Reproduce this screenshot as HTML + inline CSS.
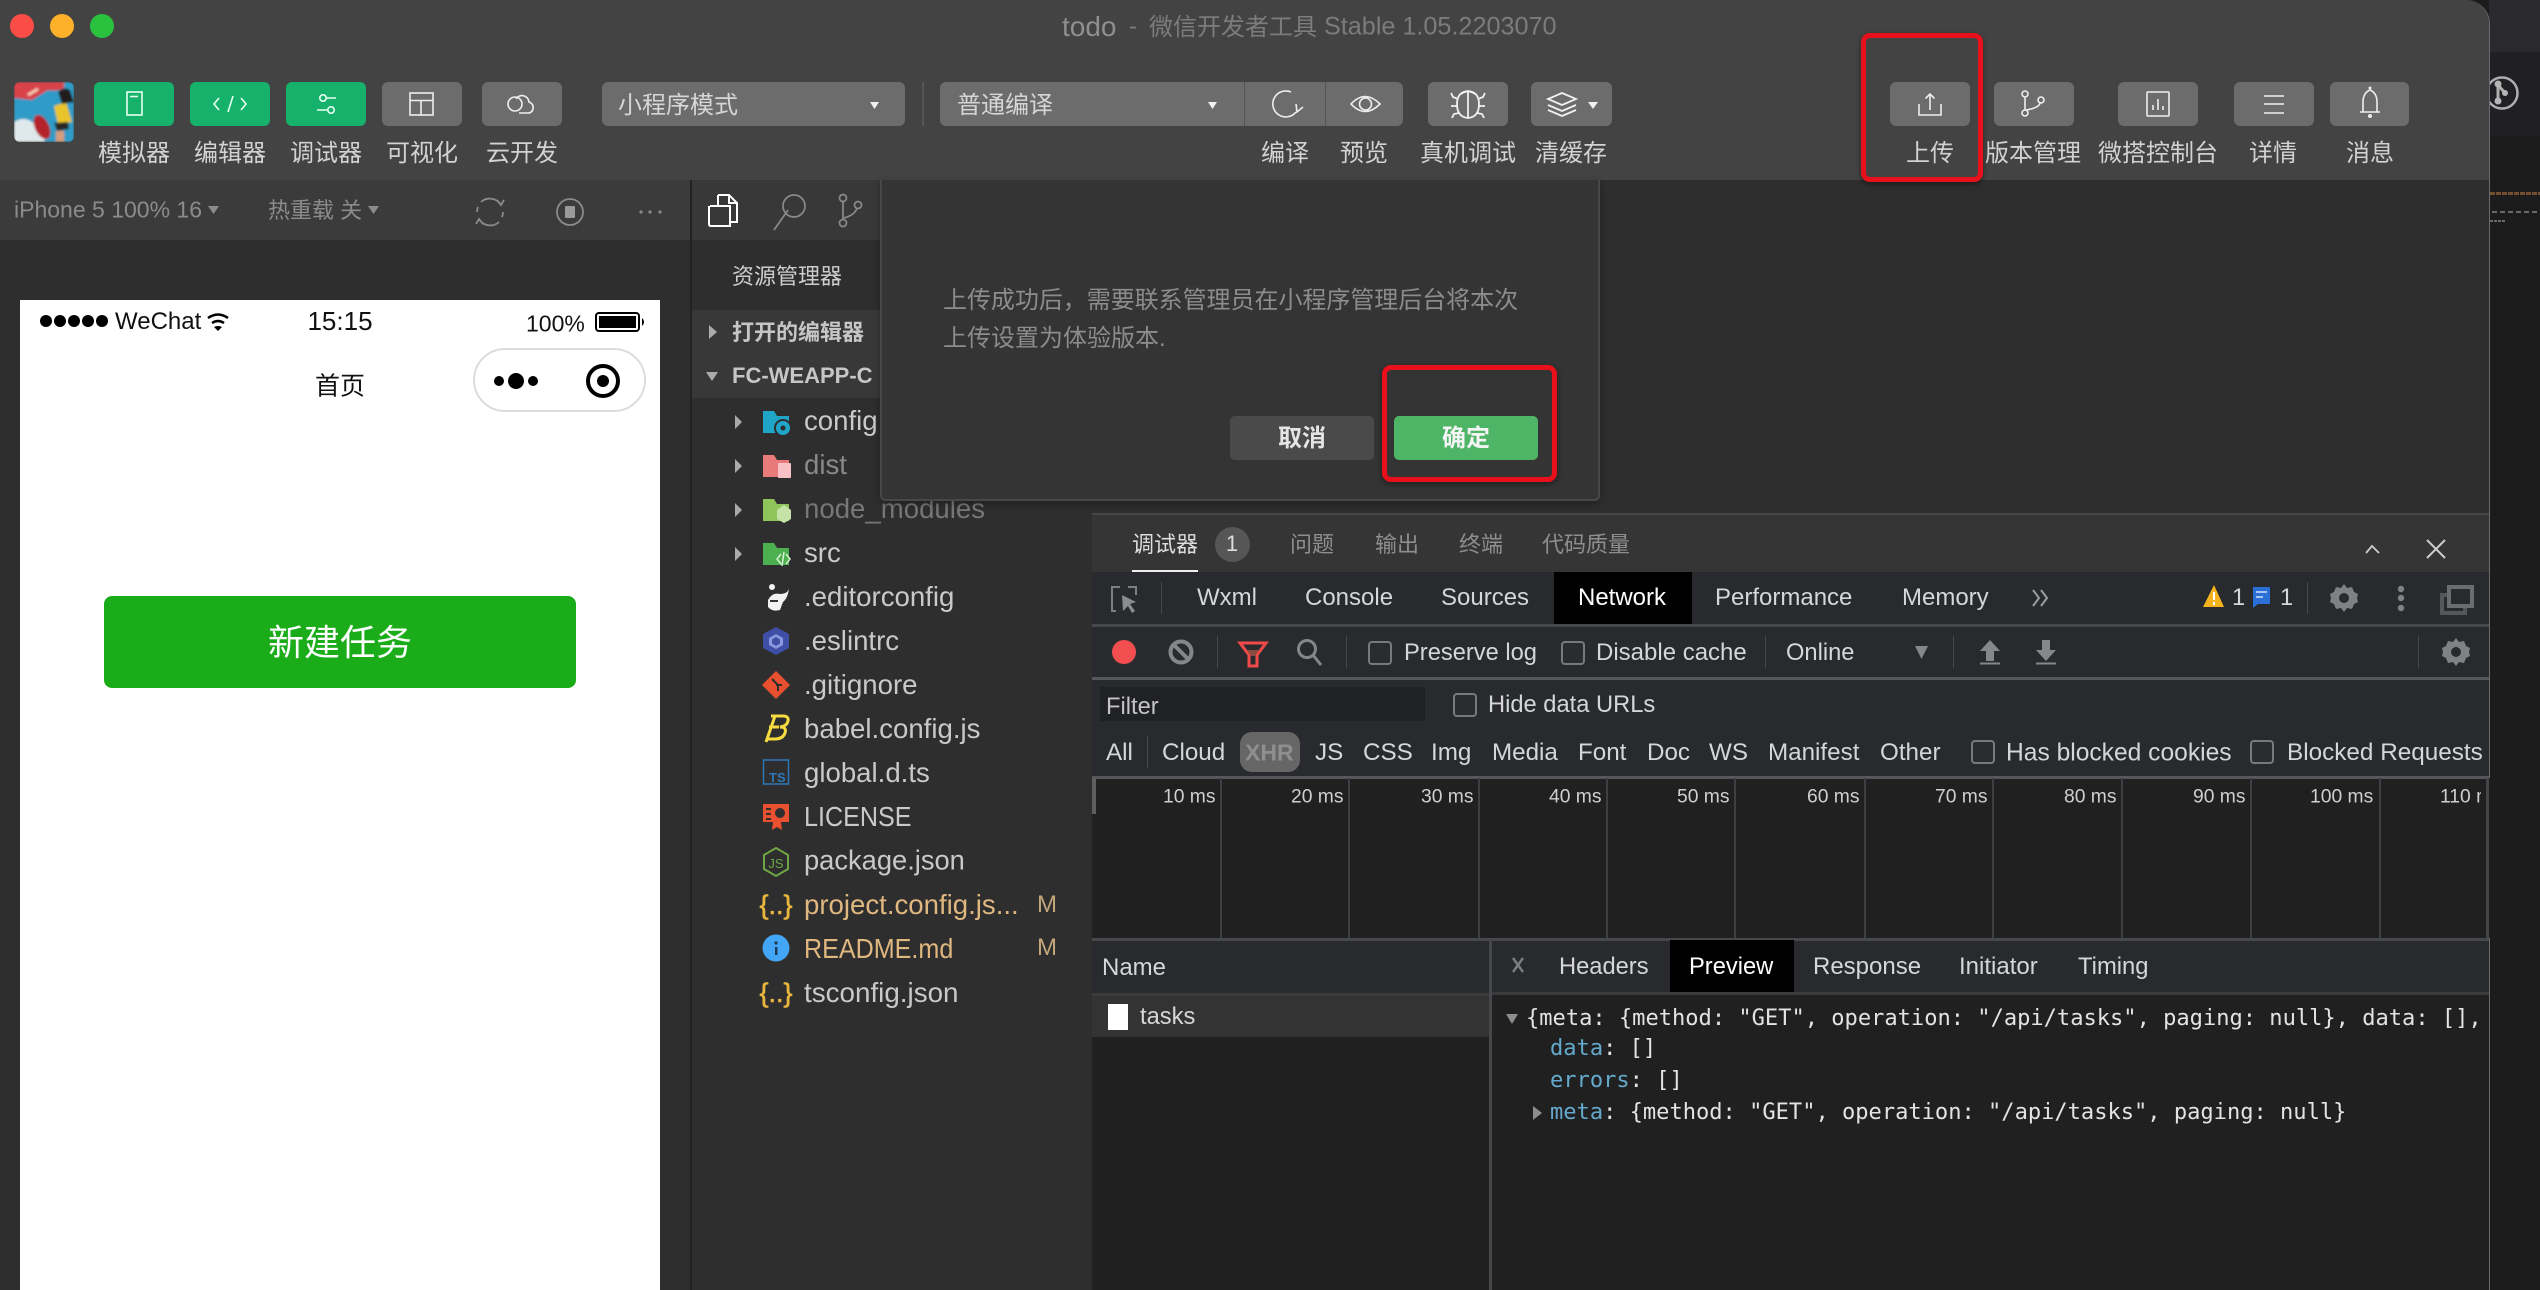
<!DOCTYPE html>
<html><head><meta charset="utf-8"><style>
html,body{margin:0;padding:0;background:#1c1c1c}
#p{position:relative;width:2540px;height:1290px;overflow:hidden;background:#1c1c1c;font-family:"Liberation Sans","Noto Sans CJK SC",sans-serif}
#p div{position:absolute}
.t{position:absolute;white-space:nowrap;line-height:1;transform:translateY(-50%);color:#c8c8c8}
.c{transform:translate(-50%,-50%)}
.l{font-size:24px;color:#d2d2d2;top:153.5px}
.b{top:82px;height:44px;border-radius:6px;background:#6c6c6c}
.g{background:#16b26b}
.f{left:804px;font-size:27.6px;color:#c9c9c9}
.sx{transform:translateY(-50%) scaleX(.91);transform-origin:left center}
.dt{font-size:23.7px;color:#d4d6d8}
.r5{font-size:24.2px}
.dt2{font-size:22px;color:#8e8e8e}
.cb{width:20px;height:20px;border:2px solid #77797c;border-radius:4px;background:#2b2c2f}
.tm{font-size:19.3px;color:#cfcfcf;top:797px}
.m{font-family:"DejaVu Sans Mono","Liberation Mono",monospace;font-size:22.06px;color:#e3e3e3}
.m i{font-style:normal;color:#64a9cc}
.ln{background:#3e3f42;width:2px;top:778px;height:160px}
</style></head><body><div id="p">

<!-- far right background -->
<div style="left:2489px;top:0;width:51px;height:52px;background:#2a2a2e"></div>
<div style="left:2489px;top:52px;width:51px;height:84px;background:#202024"></div>
<svg width="60" height="240" viewBox="2480 0 60 240" style="position:absolute;left:2480px;top:0" fill="none">
<circle cx="2502" cy="93" r="15.500" stroke="#aeaeae" stroke-width="2.500"/>
<path d="M2498 84v17M2498 85l7 8" stroke="#aeaeae" stroke-width="3"/>
<circle cx="2498" cy="84" r="3.500" fill="#b5b5b5"/><circle cx="2498" cy="101" r="3.500" fill="#b5b5b5"/><circle cx="2505" cy="93" r="3" fill="#b5b5b5"/>
<path d="M2490 193.500h50" stroke="#8a5c36" stroke-width="3" stroke-dasharray="5 1" opacity=".8"/>
<path d="M2492 212h48" stroke="#8fa0a8" stroke-width="2" stroke-dasharray="5 3" opacity=".6"/>
<path d="M2490 221h16" stroke="#8a8a8a" stroke-width="2" stroke-dasharray="3 1" opacity=".7"/>
</svg>

<!-- window -->
<div style="left:0;top:0;width:2489px;height:1290px;background:#2e2e2e;border-radius:0 24px 0 0;overflow:hidden;border-right:1px solid #6a6b6e;box-sizing:content-box">
  <div style="left:0;top:0;width:2489px;height:180px;background:#434343"></div>
  <div style="left:0;top:180px;width:690px;height:60px;background:#3b3b3b"></div>
  <div style="left:690px;top:180px;width:2px;height:1110px;background:#222"></div>
  <div style="left:692px;top:180px;width:190px;height:60px;background:#383838"></div>
  <div style="left:692px;top:310px;width:200px;height:88px;background:#383838"></div>
</div>

<!-- toolbar buttons -->
<div class="b g" style="left:94px;width:80px"></div>
<div class="b g" style="left:190px;width:80px"></div>
<div class="b g" style="left:286px;width:80px"></div>
<div class="b" style="left:382px;width:80px"></div>
<div class="b" style="left:482px;width:80px"></div>
<div class="b" style="left:602px;width:303px"></div>
<div style="left:922px;top:82px;width:2px;height:44px;background:#555"></div>
<div class="b" style="left:940px;width:463px"></div>
<div style="left:1244px;top:82px;width:1px;height:44px;background:#555"></div>
<div style="left:1325px;top:82px;width:1px;height:44px;background:#555"></div>
<div class="b" style="left:1428px;width:80px"></div>
<div class="b" style="left:1531px;width:81px"></div>
<div class="b" style="left:1890px;width:80px"></div>
<div class="b" style="left:1994px;width:80px"></div>
<div class="b" style="left:2118px;width:80px"></div>
<div class="b" style="left:2234px;width:80px"></div>
<div class="b" style="left:2330px;width:79px"></div>

<!-- title -->
<span class="t" style="left:1062px;top:27px;font-size:28px;color:#8f8f8f">todo</span>
<span class="t" style="left:1129px;top:27px;font-size:24px;color:#7c7c7c">-</span>
<span class="t" style="left:1149px;top:27.500px;font-size:24px;color:#7c7c7c">微信开发者工具</span>
<span class="t" style="left:1324px;top:27px;font-size:25.2px;color:#7c7c7c">Stable 1.05.2203070</span>

<!-- toolbar labels -->
<span class="t c l" style="left:134px">模拟器</span>
<span class="t c l" style="left:230px">编辑器</span>
<span class="t c l" style="left:326px">调试器</span>
<span class="t c l" style="left:422px">可视化</span>
<span class="t c l" style="left:522px">云开发</span>
<span class="t c l" style="left:1285px">编译</span>
<span class="t c l" style="left:1364px">预览</span>
<span class="t c l" style="left:1468px">真机调试</span>
<span class="t c l" style="left:1571px">清缓存</span>
<span class="t c l" style="left:1930px">上传</span>
<span class="t c l" style="left:2033px">版本管理</span>
<span class="t c l" style="left:2158px">微搭控制台</span>
<span class="t c l" style="left:2273px">详情</span>
<span class="t c l" style="left:2370px">消息</span>
<span class="t" style="left:618px;top:106px;font-size:24px;color:#d6d6d6">小程序模式</span>
<span class="t" style="left:957px;top:106px;font-size:24px;color:#d6d6d6">普通编译</span>

<!-- simulator toolbar -->
<span class="t" style="left:14px;top:210px;font-size:23px;color:#8b8b8b">iPhone 5 100% 16</span>
<span class="t" style="left:268px;top:211px;font-size:22px;color:#8b8b8b">热重载 关</span>

<!-- phone -->
<div style="left:20px;top:300px;width:640px;height:990px;background:#fff"></div>
<span class="t" style="left:115px;top:322px;font-size:24px;color:#111">WeChat</span>
<span class="t c" style="left:340px;top:321px;font-size:26px;color:#111">15:15</span>
<span class="t" style="left:526px;top:324px;font-size:23px;color:#111">100%</span>
<span class="t c" style="left:340px;top:386.500px;font-size:25px;color:#111">首页</span>
<div style="left:473px;top:348px;width:173px;height:64px;box-sizing:border-box;border:2px solid #dcdcdc;border-radius:32px;background:#fff"></div>
<div style="left:104px;top:596px;width:472px;height:92px;background:#1aad19;border-radius:8px"></div>
<span class="t c" style="left:340px;top:642.500px;font-size:36px;color:#fff">新建任务</span>

<!-- explorer -->
<span class="t" style="left:732px;top:277px;font-size:22px;color:#cdcdcd">资源管理器</span>
<span class="t" style="left:732px;top:333px;font-size:22px;font-weight:bold;color:#c6c6c6">打开的编辑器</span>
<span class="t" style="left:732px;top:376px;font-size:22px;font-weight:bold;color:#c6c6c6">FC-WEAPP-C</span>
<span class="t f" style="top:421px">config</span>
<span class="t f" style="top:465px;color:#8a8a8a">dist</span>
<span class="t f" style="top:509px;color:#777">node_modules</span>
<span class="t f" style="top:553px">src</span>
<span class="t f" style="top:597px">.editorconfig</span>
<span class="t f" style="top:641px">.eslintrc</span>
<span class="t f" style="top:685px">.gitignore</span>
<span class="t f" style="top:729px">babel.config.js</span>
<span class="t f" style="top:773px">global.d.ts</span>
<span class="t f sx" style="top:817px">LICENSE</span>
<span class="t f" style="top:860px;font-size:27.3px">package.json</span>
<span class="t f" style="top:905px;color:#dfb77f">project.config.js...</span>
<span class="t f sx" style="top:949px;color:#dfb77f">README.md</span>
<span class="t f" style="top:993px;font-size:27.8px">tsconfig.json</span>
<span class="t" style="left:1037px;top:905px;font-size:24px;color:#c4a67c">M</span>
<span class="t" style="left:1037px;top:948px;font-size:24px;color:#c4a67c">M</span>

<!-- debugger panel -->
<div style="left:1092px;top:513px;width:1397px;height:59px;background:#353535;border-top:2px solid #474747;box-sizing:border-box"></div>
<div style="left:1092px;top:572px;width:1397px;height:718px;background:#292a2d"></div>
<span class="t" style="left:1132px;top:545px;font-size:22px;color:#dcdcdc">调试器</span>
<div style="left:1132px;top:570px;width:66px;height:2px;background:#eee"></div>
<div style="left:1215px;top:527px;width:35px;height:35px;border-radius:50%;background:#565656"></div>
<span class="t c" style="left:1232px;top:544px;font-size:22px;color:#ddd">1</span>
<span class="t dt2" style="left:1290px;top:545px">问题</span>
<span class="t dt2" style="left:1375px;top:545px">输出</span>
<span class="t dt2" style="left:1459px;top:545px">终端</span>
<span class="t dt2" style="left:1542px;top:545px">代码质量</span>

<div style="left:1554px;top:572px;width:138px;height:52px;background:#000"></div>
<span class="t dt" style="left:1197px;top:598px;font-size:24px">Wxml</span>
<span class="t dt" style="left:1305px;top:598px;font-size:24px">Console</span>
<span class="t dt" style="left:1441px;top:598px;font-size:24px">Sources</span>
<span class="t dt" style="left:1578px;top:598px;font-size:24px;color:#fff">Network</span>
<span class="t dt" style="left:1715px;top:598px;font-size:24px">Performance</span>
<span class="t dt" style="left:1902px;top:598px;font-size:24px">Memory</span>
<span class="t dt" style="left:2232px;top:599px">1</span>
<span class="t dt" style="left:2280px;top:599px">1</span>
<div style="left:1092px;top:624px;width:1397px;height:3px;background:#46484b"></div>
<div style="left:1161px;top:582px;width:1px;height:32px;background:#46484b"></div>
<div style="left:2307px;top:582px;width:1px;height:32px;background:#46484b"></div>

<div class="cb" style="left:1368px;top:641px"></div>
<span class="t dt" style="left:1404px;top:654px">Preserve log</span>
<div class="cb" style="left:1561px;top:641px"></div>
<span class="t dt" style="left:1596px;top:653px;font-size:24px">Disable cache</span>
<span class="t dt" style="left:1786px;top:654px">Online</span>
<div style="left:1217px;top:636px;width:1px;height:32px;background:#46484b"></div>
<div style="left:1346px;top:636px;width:1px;height:32px;background:#46484b"></div>
<div style="left:1765px;top:636px;width:1px;height:32px;background:#46484b"></div>
<div style="left:1953px;top:636px;width:1px;height:32px;background:#46484b"></div>
<div style="left:2418px;top:636px;width:1px;height:32px;background:#46484b"></div>
<div style="left:1092px;top:677px;width:1397px;height:3px;background:#55575a"></div>

<div style="left:1100px;top:687px;width:325px;height:34px;background:#202124"></div>
<span class="t dt" style="left:1106px;top:708px;color:#c4c4c4">Filter</span>
<div class="cb" style="left:1453px;top:693px"></div>
<span class="t dt" style="left:1488px;top:706px">Hide data URLs</span>

<div style="left:1240px;top:732px;width:60px;height:40px;border-radius:12px;background:#666"></div>
<div style="left:1147px;top:736px;width:1px;height:32px;background:#46484b"></div>
<span class="t dt r5" style="left:1106px;top:753px">All</span>
<span class="t dt r5" style="left:1162px;top:753px">Cloud</span>
<span class="t dt r5" style="left:1245px;top:753px;color:#8f8f8f;font-weight:bold;font-size:23px">XHR</span>
<span class="t dt r5" style="left:1315px;top:753px">JS</span>
<span class="t dt r5" style="left:1363px;top:753px">CSS</span>
<span class="t dt r5" style="left:1431px;top:753px">Img</span>
<span class="t dt r5" style="left:1492px;top:753px">Media</span>
<span class="t dt r5" style="left:1578px;top:753px">Font</span>
<span class="t dt r5" style="left:1647px;top:753px">Doc</span>
<span class="t dt r5" style="left:1709px;top:753px">WS</span>
<span class="t dt r5" style="left:1768px;top:753px">Manifest</span>
<span class="t dt r5" style="left:1880px;top:753px">Other</span>
<div class="cb" style="left:1971px;top:740px"></div>
<span class="t dt r5" style="left:2006px;top:754px;font-size:24.6px">Has blocked cookies</span>
<div class="cb" style="left:2250px;top:740px"></div>
<span class="t dt r5" style="left:2287px;top:753px;font-size:24.3px">Blocked Requests</span>

<!-- timeline -->
<div style="left:1092px;top:776px;width:1397px;height:166px;background:#202020;border-top:3px solid #55575a;box-sizing:border-box"></div>
<div style="left:1092px;top:778px;width:4px;height:36px;background:#5e5e5e"></div>
<div class="ln" style="left:1220px"></div><div class="ln" style="left:1348px"></div><div class="ln" style="left:1478px"></div><div class="ln" style="left:1606px"></div><div class="ln" style="left:1734px"></div><div class="ln" style="left:1864px"></div><div class="ln" style="left:1992px"></div><div class="ln" style="left:2121px"></div><div class="ln" style="left:2250px"></div><div class="ln" style="left:2379px"></div>
<span class="t tm" style="left:1163px">10 ms</span>
<span class="t tm" style="left:1291px">20 ms</span>
<span class="t tm" style="left:1421px">30 ms</span>
<span class="t tm" style="left:1549px">40 ms</span>
<span class="t tm" style="left:1677px">50 ms</span>
<span class="t tm" style="left:1807px">60 ms</span>
<span class="t tm" style="left:1935px">70 ms</span>
<span class="t tm" style="left:2064px">80 ms</span>
<span class="t tm" style="left:2193px">90 ms</span>
<span class="t tm" style="left:2310px">100 ms</span>
<span class="t tm" style="left:2440px">110 ms</span>
<div style="left:2481px;top:779px;width:6px;height:158px;background:#202020"></div>
<div style="left:2487px;top:778px;width:53px;height:160px;background:#1c1c1c"></div>
<div style="left:2486px;top:778px;width:3px;height:160px;background:#45464a"></div>

<!-- bottom -->
<div style="left:1092px;top:938px;width:1397px;height:3px;background:#46484b"></div>
<div style="left:1092px;top:941px;width:397px;height:349px;background:#202020"></div>
<div style="left:1092px;top:941px;width:397px;height:52px;background:#292a2d"></div>
<div style="left:1092px;top:993px;width:397px;height:3px;background:#3a3b3d"></div>
<div style="left:1092px;top:996px;width:397px;height:41px;background:#333"></div>
<div style="left:1108px;top:1004px;width:20px;height:26px;background:#fff"></div>
<span class="t dt" style="left:1102px;top:968px;font-size:24px">Name</span>
<span class="t dt" style="left:1140px;top:1018px">tasks</span>
<div style="left:1489px;top:941px;width:3px;height:349px;background:#46484b"></div>
<div style="left:1492px;top:941px;width:997px;height:51px;background:#292a2d"></div>
<div style="left:1670px;top:940px;width:124px;height:52px;background:#000"></div>
<div style="left:1492px;top:992px;width:997px;height:298px;background:#202020;border-top:3px solid #3a3b3d;box-sizing:border-box"></div>
<span class="t dt" style="left:1559px;top:968px">Headers</span>
<span class="t dt" style="left:1689px;top:968px;color:#fff">Preview</span>
<span class="t dt" style="left:1813px;top:967px;font-size:24px">Response</span>
<span class="t dt" style="left:1959px;top:967px;font-size:24px">Initiator</span>
<span class="t dt" style="left:2078px;top:967px;font-size:23.8px">Timing</span>
<span class="t m" style="left:1526px;top:1019px">{meta: {method: "GET", operation: "/api/tasks", paging: null}, data: [],</span>
<span class="t m" style="left:1550px;top:1049px"><i>data</i>: []</span>
<span class="t m" style="left:1550px;top:1081px"><i>errors</i>: []</span>
<span class="t m" style="left:1550px;top:1113px"><i>meta</i>: {method: "GET", operation: "/api/tasks", paging: null}</span>

<!-- dialog -->
<div style="left:880px;top:180px;width:720px;height:321px;box-sizing:border-box;background:#343434;border:2px solid #484848;border-top:0;border-radius:0 0 5px 5px;box-shadow:0 3px 8px rgba(0,0,0,.3)"></div>
<span class="t" style="left:943px;top:301px;font-size:24px;color:#8c8c8c;letter-spacing:-.04px">上传成功后，需要联系管理员在小程序管理后台将本次</span>
<span class="t" style="left:943px;top:339px;font-size:24px;color:#8c8c8c">上传设置为体验版本.</span>
<div style="left:1230px;top:416px;width:144px;height:44px;border-radius:5px;background:#4a4a4a"></div>
<div style="left:1394px;top:416px;width:144px;height:44px;border-radius:5px;background:#4fb566"></div>
<span class="t c" style="left:1302px;top:438.500px;font-size:24px;font-weight:bold;color:#e4e4e4">取消</span>
<span class="t c" style="left:1466px;top:438.500px;font-size:24px;font-weight:bold;color:#f4f4f4">确定</span>

<!-- red boxes -->
<div style="left:1861px;top:33px;width:122px;height:149px;box-sizing:border-box;border:5px solid #e8101a;border-radius:9px;box-shadow:0 2px 6px rgba(0,0,0,.45)"></div>
<div style="left:1382px;top:365px;width:175px;height:117px;box-sizing:border-box;border:5px solid #e8101a;border-radius:9px;box-shadow:0 2px 6px rgba(0,0,0,.45)"></div>

<!-- all icons -->
<svg width="2540" height="1290" viewBox="0 0 2540 1290" style="position:absolute;left:0;top:0" fill="none">
<defs><clipPath id="av"><rect x="14" y="82" width="60" height="60" rx="6"/></clipPath><filter id="bl"><feGaussianBlur stdDeviation="1"/></filter></defs>
<!-- traffic lights -->
<circle cx="22" cy="26" r="12" fill="#fc4c46"/><circle cx="62" cy="26" r="12" fill="#fdb02a"/><circle cx="102" cy="26" r="12" fill="#2ac13f"/>
<!-- avatar -->
<g clip-path="url(#av)"><g filter="url(#bl)">
<rect x="14" y="82" width="60" height="60" fill="#2f9cc7"/>
<path d="M14 82h50v6q-8 4-16 2l-16 10-18-2z" fill="#d9434a"/>
<path d="M14 122q10-6 18 0t16 8l-4 12H14z" fill="#dfe9ec"/>
<path d="M54 106l12-4 6 20-14 2z" fill="#e9c52b"/><path d="M58 92q6-6 12-2l4 12-12 2z" fill="#241f1c"/>
<path d="M54 123l14-1 1 7-12 2z" fill="#2b2623"/><path d="M56 131h8v11h-8z" fill="#d79b78"/>
<ellipse cx="42" cy="127" rx="7" ry="13" transform="rotate(-25 42 127)" fill="#b4232a"/>
<path d="M28 95l10-6" stroke="#f4c9b4" stroke-width="3"/>
</g></g>
<!-- toolbar icons white -->
<g stroke="#eee" stroke-width="1.600">
<rect x="127" y="92" width="15" height="23" stroke="#e7fff2"/><path d="M130 96.500h8" stroke="#e7fff2"/>
<path d="M219 98l-5 6 5 6M241 98l5 6-5 6M233 96l-5 16" stroke="#e7fff2"/>
<circle cx="323" cy="98" r="3.200" stroke="#e7fff2"/><path d="M327 98h9M317 110h10" stroke="#e7fff2"/><circle cx="331" cy="110" r="3.200" stroke="#e7fff2"/>
<rect x="410" y="93" width="23" height="22"/><path d="M410 100.500h23M421 100.500v14.500"/>
<circle cx="515" cy="104" r="7"/><path d="M516 99a7 7 0 0 1 13 3q5 2 4 7-1 4-5 4h-9"/>
<path d="M1296 112a13 13 0 1 1-5-20"/><path d="M1296 104l1 8 6-5"/>
<path d="M1351 104q14-15 29 0q-15 15-29 0z"/><circle cx="1365.500" cy="104" r="6"/>
</g>
<g stroke="#f0f0f0" stroke-width="1.800">
<path d="M1457 104q0-12 11-13q11 1 11 13q0 13-11 14q-11-1-11-14zM1468 92v26M1461 94q7-5 14 0"/>
<path d="M1458 99l-5-2-2-4M1478 99l5-2 2-4M1457 106h-6M1479 106h6M1459 113l-5 1-2 4M1477 113l5 1 2 4"/>
<path d="M1562 93l14 6-14 6-14-6zM1548 105l14 6 14-6M1548 110l14 6 14-6"/>
</g>
<g stroke="#eee" stroke-width="1.600">
<path d="M1930 94v16M1925.500 98.500l4.500-4.500 4.500 4.500M1919 104v11h22v-11"/>
<circle cx="2025" cy="94" r="3"/><circle cx="2025" cy="113" r="3"/><circle cx="2041" cy="100" r="3"/><path d="M2025 97v13M2026 110q13-2 14-7"/>
<rect x="2147" y="92" width="22" height="24" rx="1"/><path d="M2153 110v-5M2158 110v-11M2163 110v-4"/>
<path d="M2264 96h20M2264 104h20M2264 113h20"/>
<path d="M2363 112v-10q0-9 7-12q7 3 7 12v10zM2360 112h20"/><circle cx="2370" cy="116" r="2" fill="#eee" stroke="none"/><circle cx="2370" cy="88" r="1.500" fill="#eee" stroke="none"/>
</g>
<path d="M870 102h9l-4.500 7z M1208 102h9l-4.500 7z M1588 102h10l-5 7z" fill="#f0f0f0"/>
<!-- sim toolbar -->
<path d="M208 206h11l-5.500 8z M368 206h11l-5.500 8z" fill="#8b8b8b"/>
<g stroke="#8b8b8b" stroke-width="1.800">
<path d="M481 202a13 13 0 0 1 20 3M499 222a13 13 0 0 1-20-3M477 212a13 13 0 0 1 1-5M503 212a13 13 0 0 1-1 5M497 200l4 5 3-5M483 224l-4-5-3 5" />
<circle cx="570" cy="212" r="13"/>
</g>
<rect x="565" y="206" width="10" height="12" rx="1" fill="#9a9a9a"/>
<g fill="#8b8b8b"><circle cx="641" cy="212" r="1.600"/><circle cx="650" cy="212" r="1.600"/><circle cx="660" cy="212" r="1.600"/></g>
<!-- activity -->
<g stroke="#fff" stroke-width="2"><path d="M718 195h11l8 8v19h-6M718 195v11M729 195v8h8"/><path d="M710 206h20v20h-19q-2 0-2-2v-18M730 206v20"/></g>
<g stroke="#8a8a8a" stroke-width="1.700"><circle cx="794" cy="206" r="11"/><path d="M788 216l-14 20" transform="translate(0 -6)"/>
<circle cx="843" cy="198" r="3.500"/><circle cx="843" cy="223" r="3.500"/><circle cx="858" cy="205" r="3.500"/><path d="M843 202v17M844 218q11-3 13-10"/></g>
<!-- tree arrows -->
<path d="M709 325l8 7-8 7z" fill="#aaa"/>
<path d="M706 372h12l-6 9z" fill="#aaa"/>
<path d="M735 415l7 7-7 7zM735 459l7 7-7 7zM735 503l7 7-7 7zM735 547l7 7-7 7z" fill="#aaa"/>
<!-- folders -->
<g>
<path d="M763 411h11l3 5h12v17h-26z" fill="#1ea5c8"/><circle cx="783" cy="428" r="8" fill="#1ea5c8" stroke="#2e2e2e" stroke-width="2"/><circle cx="783" cy="428" r="2.500" fill="#2e2e2e"/>
<path d="M763 455h11l3 5h12v17h-26z" fill="#e97a7a"/><rect x="778" y="463" width="13" height="15" rx="1" fill="#f8c1c5"/>
<path d="M763 499h11l3 5h12v17h-26z" fill="#8fc45a"/><path d="M784 505l7 5v9l-7 4-7-4v-9z" fill="#c6e3a7"/>
<path d="M763 543h11l3 5h12v17h-26z" fill="#4caf50"/><path d="M781 554l-4 5 4 5M786 554l4 5-4 5M784 552l-2 14" stroke="#d6f2d0" stroke-width="1.500"/>
<!-- editorconfig -->
<path d="M768 600q4-8 12-6 8 0 9-6-1 10-6 14l-3 8q-8 2-12-3z" fill="#f2f2f2"/><circle cx="772" cy="587" r="3" fill="#f2f2f2"/><path d="M770 601h8" stroke="#333" stroke-width="2"/>
<!-- eslint -->
<path d="M776 627l13 7v14l-13 7-13-7v-14z" fill="#3f4fa8"/><path d="M776 634l7 4v7l-7 4-7-4v-7z" fill="#8c98dc"/><path d="M776 637l4 2.500v4l-4 2.500-4-2.500v-4z" fill="#3f4fa8"/>
<!-- git -->
<path d="M776 671l14 14-14 14-14-14z" fill="#e8502f"/><path d="M772 679l6 6v6M776 685h6" stroke="#2e2e2e" stroke-width="2"/>
<!-- babel -->
<path d="M771 716h12q6 0 5 5t-8 6q7 0 5 6-2 6-10 6h-7M775 716l-9 26M769 727h10" stroke="#f7dc3f" stroke-width="3"/>
<!-- ts -->
<rect x="763.500" y="760" width="25" height="24" stroke="#2e78b7" stroke-width="1.500"/>
<text x="769" y="782" font-family="Liberation Sans" font-size="13" font-weight="bold" fill="#2e78b7">TS</text>
<!-- license -->
<path d="M763 804h26v18h-8l1 8-5-3-5 3 1-8h-10z" fill="#e8502f"/><path d="M766 809h5M766 814h5M766 819h5" stroke="#2e2e2e" stroke-width="2"/><circle cx="780" cy="813" r="5" fill="#2e2e2e"/>
<!-- node -->
<path d="M776 848l12 7v14l-12 7-12-7v-14z" stroke="#6ea544" stroke-width="2"/>
<text x="776" y="868" text-anchor="middle" font-family="Liberation Sans" font-size="13" fill="#6ea544">JS</text>
<!-- info -->
<circle cx="776" cy="948" r="13.500" fill="#42a5f5"/><rect x="775" y="947" width="2.500" height="8" fill="#1d3a55"/><circle cx="776" cy="943" r="1.600" fill="#1d3a55"/>
</g>
<text x="776" y="914" text-anchor="middle" font-family="Liberation Sans" font-size="27" fill="#e8b73c" stroke="#e8b73c" stroke-width=".6">{..}</text>
<text x="776" y="1002" text-anchor="middle" font-family="Liberation Sans" font-size="27" fill="#e8b73c" stroke="#e8b73c" stroke-width=".6">{..}</text>
<!-- devtools icons -->
<path d="M1120 587h-8v24h4M1136 595v-8h-8" stroke="#7d7f82" stroke-width="2"/>
<path d="M1122 595l14 7-6 2 5 7-3 2-4-7-5 5z" fill="#8a8c8f"/>
<path d="M2366 553l6-7 7 7" stroke="#ccc" stroke-width="1.800"/>
<path d="M2427 540l18 18M2445 540l-18 18" stroke="#ccc" stroke-width="2"/>
<path d="M2033 590l6 8-6 8M2041 590l6 8-6 8" stroke="#9a9ca0" stroke-width="2"/>
<path d="M2214 585l10 22h-21z" fill="#f5b41e"/><path d="M2214 592v8M2214 602v3" stroke="#fff" stroke-width="2"/>
<path d="M2253 587h17v17h-12l-5 4z" fill="#2a6fd6"/><path d="M2256 592h11M2256 597h7" stroke="#cfe0ff" stroke-width="1.500"/>
<g fill="#7f8184"><path d="M2344 584l3 4 5-1 2 5 4 2-1 4 1 4-4 2-2 5-5-1-3 4-3-4-5 1-2-5-4-2 1-4-1-4 4-2 2-5 5 1z"/><path d="M2456 638l3 4 5-1 2 5 4 2-1 4 1 4-4 2-2 5-5-1-3 4-3-4-5 1-2-5-4-2 1-4-1-4 4-2 2-5 5 1z"/><circle cx="2401" cy="589" r="3.200"/><circle cx="2401" cy="598" r="3.200"/><circle cx="2401" cy="608" r="3.200"/></g>
<circle cx="2344" cy="598" r="5" fill="#292a2d"/><circle cx="2456" cy="652" r="5" fill="#292a2d"/>
<path d="M2449 587h23v19h-23z" stroke="#6a6c6f" stroke-width="4"/><path d="M2447 595h-5v18h23v-5" stroke="#555759" stroke-width="4"/>
<circle cx="1124" cy="652" r="12" fill="#f44f50"/>
<circle cx="1181" cy="652" r="10.500" stroke="#84868a" stroke-width="4"/><path d="M1174 645l14 14" stroke="#84868a" stroke-width="4"/>
<path d="M1240 643h26l-9 12v11h-8v-11z" stroke="#f0494a" stroke-width="3"/><path d="M1247 650h12l-4 6h-4z" fill="#8a4a40"/>
<circle cx="1307" cy="649" r="8.500" stroke="#84868a" stroke-width="3"/><path d="M1313 655l8 10" stroke="#84868a" stroke-width="3"/>
<path d="M1915 646h13l-6.500 13z" fill="#85878a"/>
<path d="M1990 640l-10 11h6v10h8v-10h6z" fill="#85878a"/><path d="M1980 663.500h20" stroke="#85878a" stroke-width="2"/>
<path d="M2046 661l-10-11h6v-10h8v10h6z" fill="#85878a"/><path d="M2036 663.500h20" stroke="#85878a" stroke-width="2"/>
<path d="M1513 958l10 14M1523 958l-10 14" stroke="#7a7c7f" stroke-width="2.500"/>
<path d="M1506 1014h12l-6 10z" fill="#8b8d90"/><path d="M1533 1106l9 7-9 7z" fill="#8b8d90"/>
<!-- phone icons -->
<g fill="#000"><circle cx="46" cy="321" r="6"/><circle cx="60" cy="321" r="6"/><circle cx="74" cy="321" r="6"/><circle cx="88" cy="321" r="6"/><circle cx="102" cy="321" r="6"/></g>
<path d="M208 318q10-7 20 0M212 323q6-4 12 0" stroke="#000" stroke-width="2.500"/><path d="M218 331l-4-4q4-2 8 0z" fill="#000"/>
<rect x="596" y="313" width="43" height="18" rx="3" stroke="#000" stroke-width="2"/><rect x="599" y="316" width="37" height="12" fill="#000"/><path d="M642 318q4 4 0 8z" fill="#000"/>
<circle cx="499" cy="381" r="5" fill="#000"/><circle cx="516" cy="381" r="8" fill="#000"/><circle cx="533" cy="381" r="5" fill="#000"/>
<circle cx="603" cy="381" r="15" stroke="#000" stroke-width="4"/><circle cx="603" cy="381" r="6" fill="#000"/>
</svg>
</div></body></html>
